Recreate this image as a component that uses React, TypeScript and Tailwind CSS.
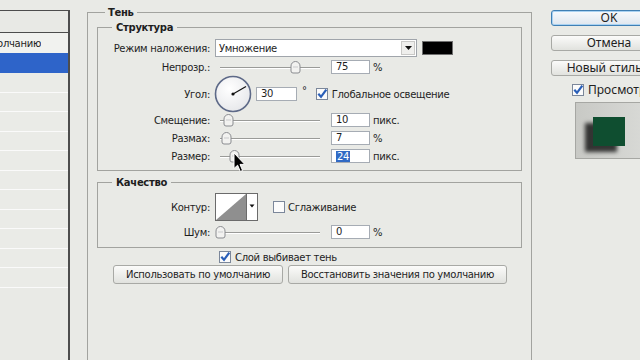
import React from 'react';

const Check = ({ on }: { on?: boolean }) => (
  <svg width="12" height="12" viewBox="0 0 12 12" className="shrink-0">
    <rect x="0.5" y="0.5" width="11" height="11" fill="#fbfbfb" stroke="#7b879a" />
    {on && <path d="M2.3 5.8 L5 8.8 L10.3 1.6" fill="none" stroke="#2a5fb8" strokeWidth="2.2" />}
  </svg>
);

const Field = ({ children, w = 'w-[39px]' }: { children: React.ReactNode; w?: string }) => (
  <div className={`${w} h-[14px] bg-white border border-[#a6acb4] pl-[4px] flex items-center leading-none`}>
    {children}
  </div>
);

const Slider = ({ pos }: { pos: string }) => (
  <div className="relative w-[110px] h-[14px] shrink-0">
    <div className="absolute left-[5px] top-[7px] w-[100px] h-px bg-[#9a9b98] shadow-[0_1px_0_#ffffff]" />
    <svg width="11" height="13" viewBox="0 0 11 13" className={`absolute top-[1px] ${pos}`}>
      <path d="M1 5 A4.5 4.5 0 0 1 10 5 V10 Q10 12 8 12 H3 Q1 12 1 10 Z" fill="#f2f2f0" stroke="#8a8c90" />
      <path d="M3 6 H8" stroke="#c9cacc" />
    </svg>
  </div>
);

const Row = ({
  label,
  h = 'h-[14px]',
  mt = 'mt-0',
  children,
}: {
  label: string;
  h?: string;
  mt?: string;
  children: React.ReactNode;
}) => (
  <div className={`flex items-center ${h} ${mt}`}>
    <div className="w-[112px] shrink-0 text-right whitespace-nowrap">{label}</div>
    <div className="ml-[5px] flex items-center h-full">{children}</div>
  </div>
);

const SliderRow = ({
  label,
  mt,
  pos,
  value,
  unit,
}: {
  label: string;
  mt?: string;
  pos: string;
  value: React.ReactNode;
  unit: string;
}) => (
  <Row label={label} mt={mt}>
    <Slider pos={pos} />
    <div className="ml-[6px]">
      <Field>{value}</Field>
    </div>
    <span className="ml-[3px]">{unit}</span>
  </Row>
);

const Btn = ({ w, children }: { w: string; children: React.ReactNode }) => (
  <div
    className={`${w} h-[19px] rounded-[3px] border border-[#a8a9a5] bg-linear-to-b from-[#fbfbfa] to-[#e1e2de] flex items-center justify-center whitespace-nowrap`}
  >
    {children}
  </div>
);

const stripes = [0, 1, 2, 3, 4, 5, 6, 7, 8, 9, 10];

export default function App() {
  return (
    <div className="relative w-[640px] h-[360px] overflow-hidden bg-[#e9eae6] font-['DejaVu_Sans',sans-serif] text-[10px] tracking-[-0.3px] text-[#1e1e1e] flex items-start">
      {/* styles list */}
      <div className="mt-[10px] w-[70px] h-[350px] shrink-0 border-t border-r-2 border-[#4d4d4d] flex flex-col">
        <div className="h-[22px] shrink-0 border-b border-[#4d4d4d] bg-[#e8e9e5]" />
        <div className="h-[20px] shrink-0 bg-[#f1f2ef] flex items-center">
          <div className="w-[41px] overflow-hidden flex justify-end">
            <span className="whitespace-nowrap">Параметры наложения: По умолчанию</span>
          </div>
        </div>
        <div className="h-[20px] shrink-0 bg-[#2e64c9]" />
        {stripes.map((i) => (
          <div key={i} className="h-[19.5px] shrink-0 border-b border-[#fafafa] bg-[#eaebe7]" />
        ))}
      </div>

      {/* Тень */}
      <fieldset className="ml-[17px] mt-[6px] w-[445px] h-[400px] shrink-0 border border-[#a2a39f]">
        <legend className="ml-[17px] px-[3px] font-bold leading-[13px]">Тень</legend>

        <fieldset className="mx-[9px] mt-[2px] border border-[#a2a39f] pt-[5px] pb-[7px]">
          <legend className="ml-[14px] px-[4px] font-bold leading-[13px]">Структура</legend>

          <Row label="Режим наложения:" h="h-[18px]">
            <div className="w-[202px] h-[18px] bg-white border border-[#a0a5ab] flex items-center pl-[3px]">
              <span className="flex-1">Умножение</span>
              <div className="w-[14px] h-[14px] mr-px bg-[#efefed] border border-[#c9c9c7] flex items-center justify-center">
                <svg width="7" height="4" viewBox="0 0 7 4">
                  <path d="M0 0h7L3.5 4z" fill="#111" />
                </svg>
              </div>
            </div>
            <div className="ml-[5px] w-[31px] h-[14px] bg-black border border-[#6f6f6f]" />
          </Row>

          <SliderRow label="Непрозр.:" mt="mt-[3px]" pos="left-[75px]" value="75" unit="%" />

          <Row label="Угол:" h="h-[34px]" mt="mt-[3px]">
            <svg width="38" height="38" viewBox="0 0 38 38" className="-ml-px shrink-0">
              <defs>
                <radialGradient id="dial" cx="40%" cy="35%" r="70%">
                  <stop offset="0" stopColor="#ffffff" />
                  <stop offset="1" stopColor="#e6e7ea" />
                </radialGradient>
              </defs>
              <circle cx="19" cy="19" r="17.5" fill="url(#dial)" stroke="#5e6a88" strokeWidth="1.6" />
              <line x1="19" y1="19" x2="32" y2="11.5" stroke="#111" strokeWidth="1.2" />
              <circle cx="19" cy="19" r="1.6" fill="#111" />
            </svg>
            <div className="ml-[4px]">
              <Field w="w-[41px]">30</Field>
            </div>
            <span className="ml-[5px] self-start mt-[9px] leading-none">°</span>
            <div className="ml-[9px]">
              <Check on />
            </div>
            <span className="ml-[4px] whitespace-nowrap">Глобальное освещение</span>
          </Row>

          <SliderRow label="Смещение:" mt="mt-[2px]" pos="left-[8px]" value="10" unit="пикс." />
          <SliderRow label="Размах:" mt="mt-[4px]" pos="left-[6px]" value="7" unit="%" />
          <SliderRow
            label="Размер:"
            mt="mt-[4px]"
            pos="left-[14px]"
            value={<span className="bg-[#316ac5] text-white px-px leading-[11px]">24</span>}
            unit="пикс."
          />
        </fieldset>

        <fieldset className="mx-[9px] mt-[5px] border border-[#a2a39f] pb-[8px]">
          <legend className="ml-[14px] px-[4px] font-bold leading-[13px]">Качество</legend>

          <Row label="Контур:" h="h-[28px]" mt="mt-[4px]">
            <svg width="43" height="28" viewBox="0 0 43 28" className="shrink-0">
              <rect x="0.5" y="0.5" width="42" height="27" fill="#ffffff" stroke="#6b6b6b" />
              <path d="M1 27 L31 1 V27 Z" fill="#8f8f8f" />
              <line x1="31.5" y1="0.5" x2="31.5" y2="27.5" stroke="#6b6b6b" />
              <path d="M34.5 11.5 h5 l-2.5 3 z" fill="#111" />
            </svg>
            <div className="ml-[15px]">
              <Check />
            </div>
            <span className="ml-[3px]">Сглаживание</span>
          </Row>

          <SliderRow label="Шум:" mt="mt-[4px]" pos="left-0" value="0" unit="%" />
        </fieldset>

        <div className="mt-[2px] h-[14px] pl-[131px] flex items-center">
          <Check on />
          <span className="ml-[4px] whitespace-nowrap">Слой выбивает тень</span>
        </div>

        <div className="mt-px pl-[25px] flex gap-[5px]">
          <Btn w="w-[170px]">Использовать по умолчанию</Btn>
          <Btn w="w-[219px]">Восстановить значения по умолчанию</Btn>
        </div>
      </fieldset>

      {/* buttons and preview */}
      <div className="ml-[19px] mt-[10px] w-[116px] shrink-0 flex flex-col font-['Noto_Sans',sans-serif] text-[12px] tracking-normal text-[#222]">
        <div className="h-[16px] rounded-[3px] border border-[#3f7fb4] bg-linear-to-b from-[#f7fafd] to-[#dfe6ee] shadow-[inset_0_0_0_1px_#a9d2f2] flex items-center justify-center leading-none">
          OK
        </div>
        <div className="mt-[9px] h-[16px] rounded-[3px] border border-[#a8a9a5] bg-linear-to-b from-[#fbfbfa] to-[#e1e2de] flex items-center justify-center leading-none">
          Отмена
        </div>
        <div className="mt-[9px] h-[16px] rounded-[3px] border border-[#a8a9a5] bg-linear-to-b from-[#fbfbfa] to-[#e1e2de] flex items-center justify-center leading-none whitespace-nowrap">
          Новый стиль...
        </div>
        <div className="mt-[8px] h-[12px] pl-[21px] flex items-center">
          <Check on />
          <span className="ml-[4px] leading-none">Просмотр</span>
        </div>
        <div className="mt-[6px] ml-[24px] w-[90px] h-[57px] border border-[#a6a7a3] bg-linear-to-r from-[#c8c9c5] to-[#dddedb] pt-[14px] pl-[17px]">
          <div className="w-[32px] h-[29px] bg-[#0f4e30] shadow-[-8px_6px_4px_rgba(0,0,0,0.75)]" />
        </div>
      </div>

      {/* mouse pointer */}
      <svg width="13" height="21" viewBox="0 0 13 21" className="absolute left-[233px] top-[152px]">
        <path d="M1 1 V16.5 L4.6 13.2 L7.3 19.5 L9.6 18.5 L7 12.4 H11.8 Z" fill="#000" stroke="#fff" strokeWidth="1" />
      </svg>
    </div>
  );
}
